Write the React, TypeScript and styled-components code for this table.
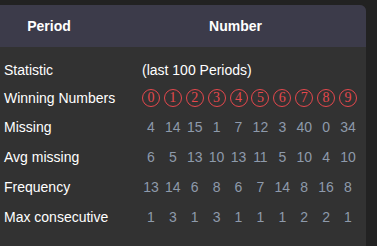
import React from "react";
import styled, { createGlobalStyle } from "styled-components";

const Global = createGlobalStyle`
  html, body {
    margin: 0;
    padding: 0;
    background: #222222;
  }
  body {
    font-family: "Liberation Sans", Arial, sans-serif;
  }
`;

const Page = styled.div`
  height: 246px;
  padding: 5px 11px 0 0;
  box-sizing: border-box;
  display: flex;
`;

const Panel = styled.div`
  flex: 1;
  background: #323232;
  border-radius: 0 6px 0 0;
  overflow: hidden;
  display: flex;
  flex-direction: column;
`;

const Head = styled.div`
  height: 42px;
  background: #3c3b4a;
  display: grid;
  grid-template-columns: 98px 1fr;
  align-items: center;
  color: #ffffff;
  font-size: 14px;
  font-weight: bold;
`;

const HeadCell = styled.div<{ $shift?: number }>`
  text-align: center;
  padding-left: ${(p) => (p.$shift ? p.$shift : 0)}px;
`;

const Body = styled.div`
  padding-top: 9px;
  display: flex;
  flex-direction: column;
`;

const Row = styled.div<{ $h: number }>`
  height: ${(p) => p.$h}px;
  display: grid;
  grid-template-columns: 140px repeat(10, 21.9px);
  align-items: center;
  font-size: 14px;
`;

const Label = styled.div`
  color: #ffffff;
  padding-left: 4px;
  white-space: nowrap;
`;

const Note = styled.div`
  grid-column: 2 / -1;
  color: #ffffff;
  padding-left: 2px;
  white-space: nowrap;
`;

const Val = styled.div`
  color: #8e9aab;
  text-align: center;
`;

const Ball = styled.div`
  justify-self: center;
  width: 18px;
  height: 18px;
  box-sizing: border-box;
  border: 1px solid #e5484d;
  border-radius: 50%;
  color: #e5484d;
  font-family: "Liberation Serif", "Times New Roman", serif;
  font-size: 14px;
  display: flex;
  align-items: center;
  justify-content: center;
`;

const stats: { label: string; values: number[] }[] = [
  { label: "Missing", values: [4, 14, 15, 1, 7, 12, 3, 40, 0, 34] },
  { label: "Avg missing", values: [6, 5, 13, 10, 13, 11, 5, 10, 4, 10] },
  { label: "Frequency", values: [13, 14, 6, 8, 6, 7, 14, 8, 16, 8] },
  { label: "Max consecutive", values: [1, 3, 1, 3, 1, 1, 1, 2, 2, 1] },
];

export default function App() {
  return (
    <Page>
      <Global />
      <Panel>
        <Head>
          <HeadCell>Period</HeadCell>
          <HeadCell $shift={7}>Number</HeadCell>
        </Head>
        <Body>
          <Row $h={28}>
            <Label>Statistic</Label>
            <Note>(last 100 Periods)</Note>
          </Row>
          <Row $h={28}>
            <Label>Winning Numbers</Label>
            {[0, 1, 2, 3, 4, 5, 6, 7, 8, 9].map((n) => (
              <Ball key={n}>{n}</Ball>
            ))}
          </Row>
          {stats.map((s) => (
            <Row $h={30} key={s.label}>
              <Label>{s.label}</Label>
              {s.values.map((v, i) => (
                <Val key={i}>{v}</Val>
              ))}
            </Row>
          ))}
        </Body>
      </Panel>
    </Page>
  );
}
